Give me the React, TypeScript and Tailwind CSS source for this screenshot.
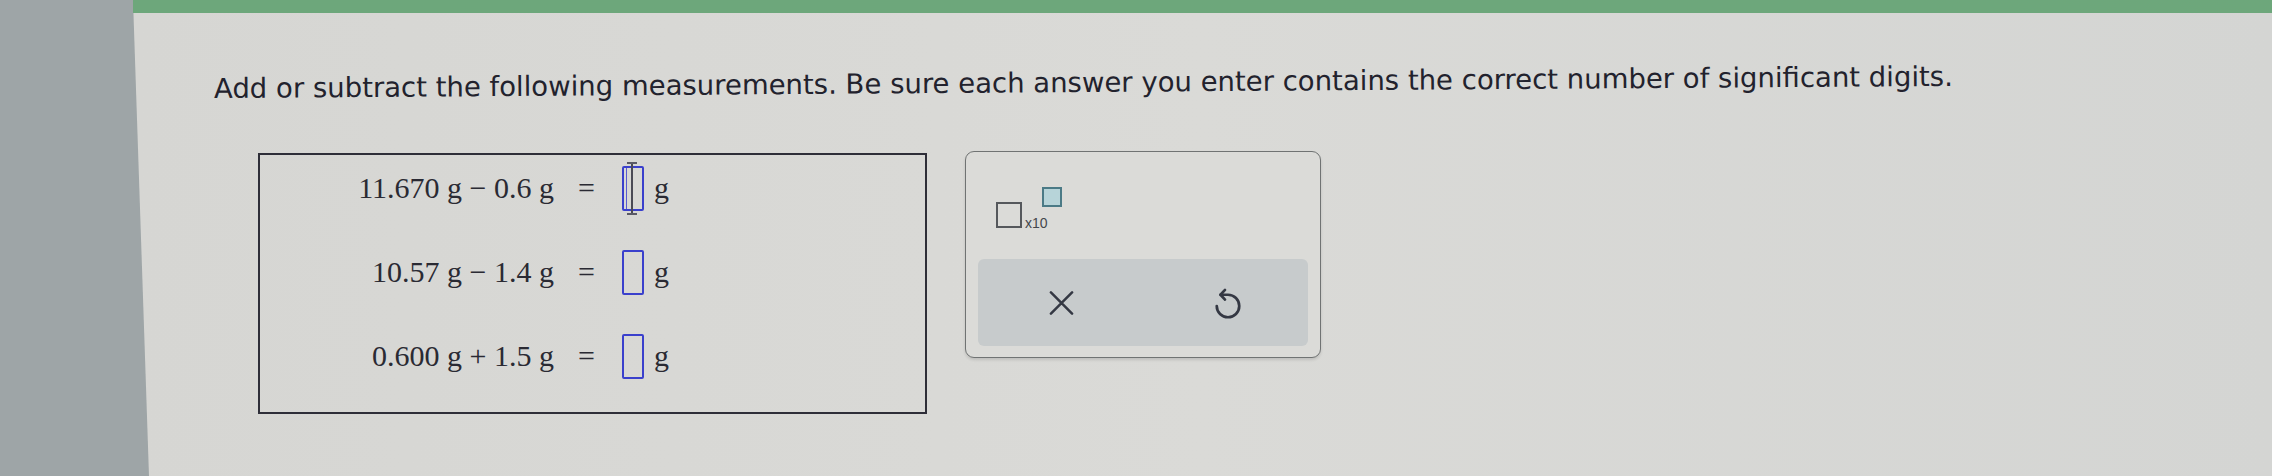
import React from "react";

const serif = { fontFamily: '"Liberation Serif", "Times New Roman", serif' };

function InputBox({ cursor = false }: { cursor?: boolean }) {
  return (
    <div className="relative w-[22px] h-[45px] border-[2.5px] border-[#3a40cc] rounded-[2px]">
      {cursor && (
        <>
          <div className="absolute left-[7px] top-[-6px] bottom-[-6px] w-[2px] bg-[#4a4a55]" />
          <div className="absolute left-[3px] top-[-6px] w-[10px] h-[2px] bg-[#5a5a66]" />
          <div className="absolute left-[3px] bottom-[-6px] w-[10px] h-[2px] bg-[#5a5a66]" />
          <div className="absolute left-[2px] top-0 bottom-0 w-[1.5px] bg-[#5a5ad0]" />
        </>
      )}
    </div>
  );
}

function Row({ expr, cursor }: { expr: React.ReactNode; cursor?: boolean }) {
  return (
    <div className="flex items-center h-[46px] text-[30px] text-[#2a2a33]" style={serif}>
      <div className="w-[294px] text-right whitespace-pre leading-none">{expr}</div>
      <div className="ml-[24px] leading-none">=</div>
      <div className="ml-[27px]">
        <InputBox cursor={cursor} />
      </div>
      <div className="ml-[10px] leading-none">g</div>
    </div>
  );
}

export default function App() {
  return (
    <div className="w-[2272px] h-[476px] flex overflow-hidden bg-[#d8d8d5]">
      <div className="w-[133px] h-full bg-[#9ea5a7] shrink-0" />
      <div className="relative flex-1 flex flex-col bg-gradient-to-r from-[#d6d6d3] via-[#dadad7] to-[#d4d5d3]">
        <div className="absolute left-0 top-0 w-[16px] h-full bg-[#9ea5a7] [clip-path:polygon(0_0,0_100%,100%_100%)]" />
        <div className="relative h-[13px] bg-[#6da77b] shrink-0" />
        <div className="pl-[81px] pt-[59px]">
          <p
            className="text-[27.5px] leading-[32px] text-[#22222d] whitespace-nowrap origin-left -rotate-[0.4deg]"
            style={{ fontFamily: '"DejaVu Sans", Verdana, sans-serif' }}
          >
            Add or subtract the following measurements. Be sure each answer you enter contains the correct number of significant digits.
          </p>
        </div>
        <div className="flex items-start pl-[125px] mt-[45px]">
          <div className="w-[669px] h-[261px] border-2 border-[#2e2e38] mt-[4px] flex flex-col pt-[10px] gap-[38px]">
            <Row expr={"11.670 g \u2212 0.6 g"} cursor />
            <Row expr={"10.57 g \u2212 1.4 g"} />
            <Row expr={"0.600 g + 1.5 g"} />
          </div>
          <div className="ml-[38px] mt-[2px] w-[356px] h-[207px] border-[1.5px] border-[#707373] rounded-[9px] bg-[#dbdbd8] flex flex-col shadow-[0_2px_3px_rgba(0,0,0,0.12)]">
            <div className="h-[107px] relative">
              <div className="absolute left-[30px] top-[50px] w-[26px] h-[26px] border-2 border-[#55585c]" />
              <div
                className="absolute left-[59px] top-[64px] text-[14px] leading-none text-[#44474c]"
                style={{ fontFamily: '"Liberation Sans", Arial, sans-serif' }}
              >
                x10
              </div>
              <div className="absolute left-[76px] top-[35px] w-[20px] h-[20px] border-2 border-[#4b7a86] bg-[#b7d4d9]" />
            </div>
            <div className="mx-[12px] h-[87px] rounded-[6px] bg-[#c7cbcc] flex items-center pl-[71px]">
              <svg width="25" height="24" viewBox="0 0 26 24" fill="none" stroke="#343843" strokeWidth="2.6" strokeLinecap="round">
                <path d="M2 1 L24 23 M24 1 L2 23" />
              </svg>
              <svg className="ml-[136px]" width="36" height="36" viewBox="0 0 24 24" fill="none" stroke="#343843" strokeWidth="1.8" strokeLinecap="round" strokeLinejoin="round">
                <path d="M4.5 14 A7.5 7.5 0 1 0 12 6.5 L7 6.5" />
                <path d="M10 3.3 L7 6.5 L10 9.7" />
              </svg>
            </div>
          </div>
        </div>
      </div>
    </div>
  );
}
